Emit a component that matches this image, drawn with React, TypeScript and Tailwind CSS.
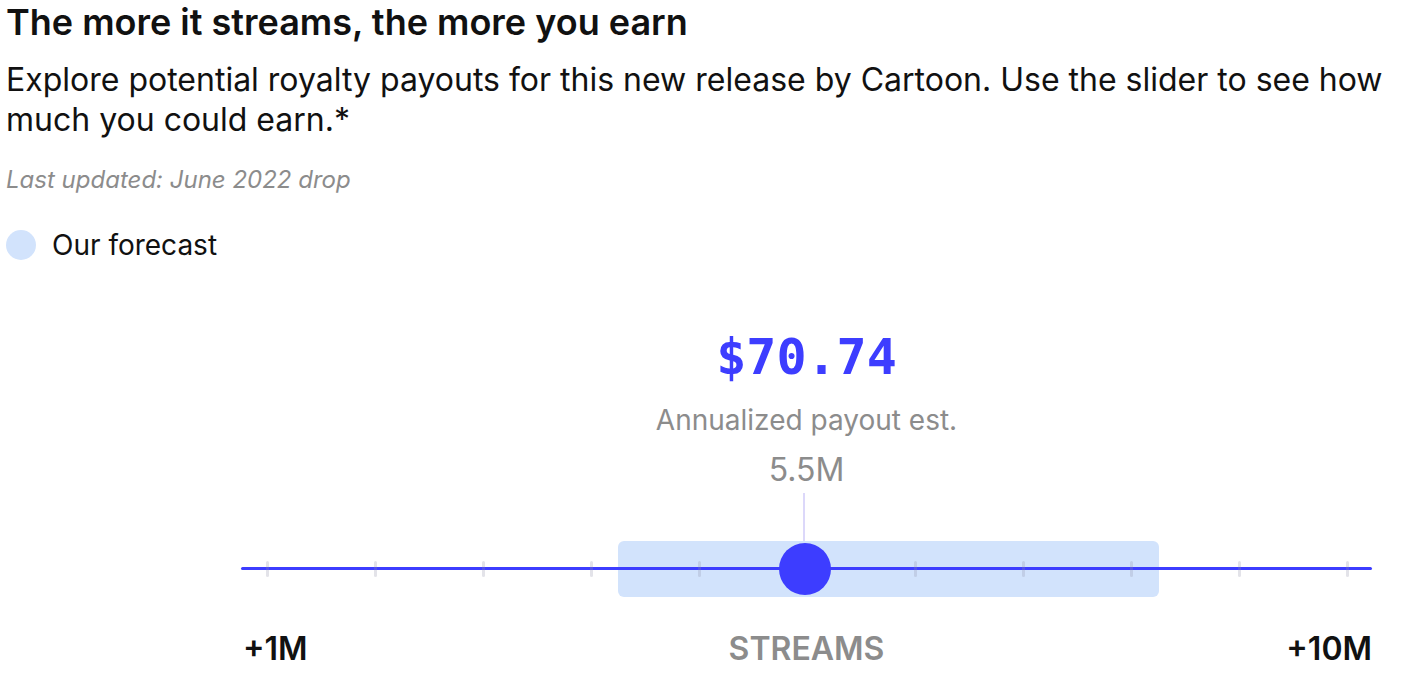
const ticks = [0, 1, 2, 3, 4, 5, 6, 7, 8, 9, 10];

const StreamSlider = () => {
  return (
    <div className="relative h-[56px] w-full">
      {/* forecast band */}
      <div className="absolute left-[377px] top-0 h-[56px] w-[541px] rounded-[6px] bg-[#d2e3fc]" />
      {/* track */}
      <div className="absolute left-0 right-0 top-[26px] h-[3px] rounded-full bg-[#3d3dff]" />
      {ticks.map((i) => (
        <div
          key={i}
          className="absolute top-[20px] h-[16px] w-[3px] rounded-full bg-[#8f8fa8]/25"
          style={{ left: 25 + i * 108 }}
        />
      ))}
      <div className="absolute left-[538px] top-[2px] size-[52px] rounded-full bg-[#3d3dff]" />
    </div>
  );
};

export default function App() {
  return (
    <div
      className="h-[680px] w-[1408px] overflow-hidden bg-white text-[#111]"
      style={{ fontFamily: "Inter, 'Noto Sans', sans-serif" }}
    >
      <div className="pl-[6px] pt-[2px]">
        <h1 className="text-[36px] font-semibold leading-[40px]">
          The more it streams, the more you earn
        </h1>
        <p className="mt-[18px] w-[1398px] text-[32px] leading-[40px]">
          Explore potential royalty payouts for this new release by Cartoon. Use the slider to see how much you could earn.*
        </p>
        <p className="mt-[25px] text-[24px] italic leading-[30px] text-[#8c8c8c]">
          Last updated: June 2022 drop
        </p>
        <div className="mt-[35px] flex items-center gap-[16px]">
          <div className="size-[30px] rounded-full bg-[#d2e3fc]" />
          <span className="text-[28px] leading-[30px]">Our forecast</span>
        </div>
      </div>

      <div className="pl-[241px] pr-[36px]">
        <div className="mt-[69px] flex flex-col items-center">
          <div
            className="text-[50px] font-bold leading-[56px] text-[#3d3dff]"
            style={{ fontFamily: "'DejaVu Sans Mono', monospace" }}
          >
            $70.74
          </div>
          <div className="mt-[17px] text-[28px] leading-[36px] text-[#8c8c8c]">
            Annualized payout est.
          </div>
          <div className="mt-[14px] text-[32px] leading-[36px] text-[#8c8c8c]">5.5M</div>
        </div>
        <div className="ml-[562px] mt-[5px] h-[48px] w-[2px] bg-[#dcd8fa]" />
        <StreamSlider />
        <div className="mt-[34px] grid grid-cols-[1fr_auto_1fr] items-center text-[32px] font-semibold leading-[36px]">
          <span className="pl-[2px]">+1M</span>
          <span className="text-[#8c8c8c]">STREAMS</span>
          <span className="text-right">+10M</span>
        </div>
      </div>
    </div>
  );
}
